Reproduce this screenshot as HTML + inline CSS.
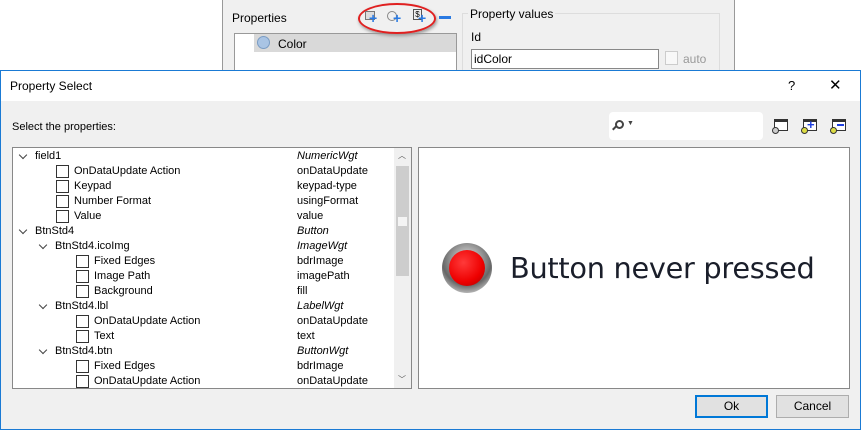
<!DOCTYPE html><html><head><style>
*{margin:0;padding:0;box-sizing:border-box}
body{width:862px;height:430px;background:#fff;position:relative;overflow:hidden;font-family:"Liberation Sans",sans-serif;font-size:11px;color:#000}
.a{position:absolute}
.row{position:absolute;left:0;height:15px;line-height:15px;white-space:nowrap}
.cb{position:absolute;width:13px;height:13px;border:1px solid #333;background:#fff;top:1px}
.ar{position:absolute;top:3px;width:6px;height:6px;border-right:1.3px solid #444;border-bottom:1.3px solid #444;transform:rotate(45deg)}
.t{position:absolute;left:284px}
.i{font-style:italic}
</style></head><body>
<div class="a" style="left:222px;top:0;width:513px;height:72px;background:#f0f0f0;border-left:1px solid #999;border-right:1px solid #999"></div>
<div class="a" style="left:232px;top:11px;font-size:12px">Properties</div>
<div class="a" style="left:234px;top:33px;width:223px;height:40px;background:#fff;border:1px solid #999"></div>
<div class="a" style="left:254px;top:34px;width:202px;height:18px;background:#d9d9d9"></div>
<div class="a" style="left:257px;top:36px;width:13px;height:13px;border-radius:50%;background:#a9c4e4;border:1px solid #7a9cc4"></div>
<div class="a" style="left:278px;top:37px;font-size:12px">Color</div>
<div class="a" style="left:462px;top:13px;width:258px;height:60px;border:1px solid #ddd"></div>
<div class="a" style="left:468px;top:7px;font-size:12px;background:#f0f0f0;padding:0 2px">Property values</div>
<div class="a" style="left:471px;top:30px;font-size:12px">Id</div>
<div class="a" style="left:471px;top:49px;width:188px;height:20px;background:#fff;border:1px solid #888;font-size:12px;padding:2px 2px">idColor</div>
<div class="a" style="left:665px;top:51px;width:13px;height:14px;border:1px solid #ccc;background:#f8f8f8"></div>
<div class="a" style="left:683px;top:52px;color:#999;font-size:12px">auto</div>
<div class="a" style="left:358px;top:3px;width:78px;height:31px;border:2px solid #e02020;border-radius:50%;box-shadow:1px 2px 3px #999"></div>
<div class="a" style="left:365px;top:11px;width:10px;height:9px;border:1px solid #777;background:#ddd"></div>
<div class="a" style="left:369px;top:10px;color:#2a7ae2;font-weight:bold;font-size:14px">+</div>
<div class="a" style="left:387px;top:11px;width:10px;height:10px;border:1px solid #888;border-radius:50%"></div>
<div class="a" style="left:393px;top:10px;color:#2a7ae2;font-weight:bold;font-size:14px">+</div>
<div class="a" style="left:413px;top:9px;width:9px;height:11px;border:1px solid #555;font-size:8px;text-align:center">$</div>
<div class="a" style="left:418px;top:10px;color:#2a7ae2;font-weight:bold;font-size:14px">+</div>
<div class="a" style="left:439px;top:16px;width:12px;height:3px;background:#2a7ae2"></div>
<div class="a" style="left:0;top:70px;width:861px;height:360px;background:#f0f0f0;border:1px solid #1a7ad4"></div>
<div class="a" style="left:1px;top:71px;width:859px;height:30px;background:#fff"></div>
<div class="a" style="left:10px;top:79px;font-size:12px">Property Select</div>
<div class="a" style="left:788px;top:78px;font-size:13px">?</div>
<div class="a" style="left:829px;top:76px;font-size:15px;font-weight:300;font-family:'DejaVu Sans',sans-serif">✕</div>
<div class="a" style="left:12px;top:121px;font-size:11px">Select the properties:</div>
<div class="a" style="left:609px;top:112px;width:154px;height:28px;background:#fff;border-radius:4px"></div>
<div class="a" style="left:615px;top:120px;width:9px;height:9px;border:2px solid #444;border-radius:50%"></div>
<div class="a" style="left:612px;top:127px;width:5px;height:2px;background:#444;transform:rotate(-45deg)"></div>
<div class="a" style="left:627px;top:120px;font-size:7px;color:#444">▼</div>
<div class="a" style="left:774px;top:119px;width:14px;height:12px;border:1px solid #333;border-top:3px solid #333;background:#fff"></div>
<div class="a" style="left:772px;top:127px;width:7px;height:7px;border:1px solid #333;border-radius:50%;background:#ccc"></div>
<div class="a" style="left:803px;top:119px;width:14px;height:12px;border:1px solid #333;border-top:3px solid #333;background:#fff"></div>
<div class="a" style="left:807px;top:117px;color:#1f3fe0;font-weight:bold;font-size:13px">+</div>
<div class="a" style="left:801px;top:127px;width:7px;height:7px;border:1px solid #333;border-radius:50%;background:#dd4"></div>
<div class="a" style="left:832px;top:119px;width:14px;height:12px;border:1px solid #333;border-top:3px solid #333;background:#fff"></div>
<div class="a" style="left:837px;top:124px;width:7px;height:2px;background:#1f3fe0"></div>
<div class="a" style="left:830px;top:127px;width:7px;height:7px;border:1px solid #333;border-radius:50%;background:#dd4"></div>
<div class="a" style="left:12px;top:147px;width:400px;height:242px;background:#fff;border:1px solid #888;overflow:hidden">
<div class="a" style="left:0;top:1px;width:398px;height:240px">
<div class="row" style="top:0"><i class="ar" style="left:7px"></i><span class="a" style="left:22px">field1</span><span class="t i">NumericWgt</span></div>
<div class="row" style="top:15px"><i class="cb" style="left:43px"></i><span class="a" style="left:61px">OnDataUpdate Action</span><span class="t">onDataUpdate</span></div>
<div class="row" style="top:30px"><i class="cb" style="left:43px"></i><span class="a" style="left:61px">Keypad</span><span class="t">keypad-type</span></div>
<div class="row" style="top:45px"><i class="cb" style="left:43px"></i><span class="a" style="left:61px">Number Format</span><span class="t">usingFormat</span></div>
<div class="row" style="top:60px"><i class="cb" style="left:43px"></i><span class="a" style="left:61px">Value</span><span class="t">value</span></div>
<div class="row" style="top:75px"><i class="ar" style="left:7px"></i><span class="a" style="left:22px">BtnStd4</span><span class="t i">Button</span></div>
<div class="row" style="top:90px"><i class="ar" style="left:27px"></i><span class="a" style="left:42px">BtnStd4.icoImg</span><span class="t i">ImageWgt</span></div>
<div class="row" style="top:105px"><i class="cb" style="left:63px"></i><span class="a" style="left:81px">Fixed Edges</span><span class="t">bdrImage</span></div>
<div class="row" style="top:120px"><i class="cb" style="left:63px"></i><span class="a" style="left:81px">Image Path</span><span class="t">imagePath</span></div>
<div class="row" style="top:135px"><i class="cb" style="left:63px"></i><span class="a" style="left:81px">Background</span><span class="t">fill</span></div>
<div class="row" style="top:150px"><i class="ar" style="left:27px"></i><span class="a" style="left:42px">BtnStd4.lbl</span><span class="t i">LabelWgt</span></div>
<div class="row" style="top:165px"><i class="cb" style="left:63px"></i><span class="a" style="left:81px">OnDataUpdate Action</span><span class="t">onDataUpdate</span></div>
<div class="row" style="top:180px"><i class="cb" style="left:63px"></i><span class="a" style="left:81px">Text</span><span class="t">text</span></div>
<div class="row" style="top:195px"><i class="ar" style="left:27px"></i><span class="a" style="left:42px">BtnStd4.btn</span><span class="t i">ButtonWgt</span></div>
<div class="row" style="top:210px"><i class="cb" style="left:63px"></i><span class="a" style="left:81px">Fixed Edges</span><span class="t">bdrImage</span></div>
<div class="row" style="top:225px"><i class="cb" style="left:63px"></i><span class="a" style="left:81px">OnDataUpdate Action</span><span class="t">onDataUpdate</span></div>
</div>
<div class="a" style="left:381px;top:0;width:17px;height:240px;background:#f0f0f0"></div>
<div class="a" style="left:383px;top:18px;width:13px;height:110px;background:#cdcdcd"></div>
<div class="a" style="left:385px;top:69px;width:9px;height:9px;background:#f4f4f4"></div>
<div class="a" style="left:385px;top:2px;font-size:8px;color:#555">︿</div>
<div class="a" style="left:385px;top:226px;font-size:8px;color:#555">﹀</div>
</div>
<div class="a" style="left:418px;top:147px;width:432px;height:242px;background:#fff;border:1px solid #888"></div>
<div class="a" style="left:442px;top:243px;width:50px;height:50px;border-radius:50%;background:radial-gradient(circle at 50% 35%,#eee,#666 60%,#ccc 85%,#555)"></div>
<div class="a" style="left:449px;top:250px;width:36px;height:36px;border-radius:50%;background:radial-gradient(circle at 40% 35%,#ff3a3a,#e00 60%,#a00)"></div>
<div class="a" style="left:510px;top:251px;font-family:'DejaVu Sans',sans-serif;font-size:28.8px;color:#1a1e2a;letter-spacing:-0.3px">Button never pressed</div>
<div class="a" style="left:695px;top:395px;width:73px;height:23px;background:#e1e1e1;border:2px solid #0078d7;text-align:center;line-height:19px;font-size:12px">Ok</div>
<div class="a" style="left:776px;top:395px;width:73px;height:23px;background:#e1e1e1;border:1px solid #adadad;text-align:center;line-height:21px;font-size:12px">Cancel</div>
</body></html>
